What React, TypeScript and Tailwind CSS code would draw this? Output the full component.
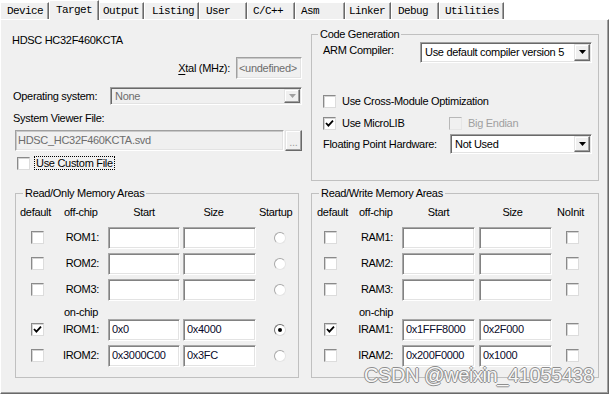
import React from 'react'

const sunken =
  'border border-t-[#a0a0a0] border-l-[#a0a0a0] border-r-white border-b-white shadow-[inset_1px_1px_0_#696969,inset_-1px_-1px_0_#e3e3e3]'
const sunkenField =
  'border border-t-[#a8a8a8] border-l-[#a8a8a8] border-r-white border-b-white shadow-[inset_1px_1px_0_#828282,inset_-1px_-1px_0_#e3e3e3]'
const sunkenLight =
  'border border-t-[#a0a0a0] border-l-[#a0a0a0] border-r-white border-b-white shadow-[inset_1px_1px_0_#c8c8c8,inset_-1px_-1px_0_#e3e3e3]'
const raised =
  'bg-[#f0f0f0] border border-t-[#e3e3e3] border-l-[#e3e3e3] border-r-[#696969] border-b-[#696969] shadow-[inset_-1px_-1px_0_#a0a0a0,inset_1px_1px_0_#ffffff]'

const tabs = [
  { label: 'Device', w: 'w-[49px]', pl: 'pl-[6px]' },
  { label: 'Target', w: 'w-[50px]', pl: 'pl-[6px]', active: true },
  { label: 'Output', w: 'w-[45px]', pl: 'pl-[3px]' },
  { label: 'Listing', w: 'w-[55px]', pl: 'pl-[7px]' },
  { label: 'User', w: 'w-[48px]', pl: 'pl-[6px]' },
  { label: 'C/C++', w: 'w-[48px]', pl: 'pl-[5px]' },
  { label: 'Asm', w: 'w-[50px]', pl: 'pl-[5px]' },
  { label: 'Linker', w: 'w-[46px]', pl: 'pl-[3px]' },
  { label: 'Debug', w: 'w-[48px]', pl: 'pl-[6px]' },
  { label: 'Utilities', w: 'w-[65px]', pl: 'pl-[5px]' },
]

const Check = ({ on, disabled }: { on?: boolean; disabled?: boolean }) => (
  <span
    className={
      disabled
        ? 'w-[13px] h-[13px] flex items-center justify-center bg-[#f0f0f0] border border-t-[#b8b8b8] border-l-[#b8b8b8] border-r-[#e6e6e6] border-b-[#e6e6e6]'
        : 'w-[13px] h-[13px] flex items-center justify-center bg-white border border-t-[#8a8a8a] border-l-[#8a8a8a] border-r-[#dcdcdc] border-b-[#dcdcdc] shadow-[inset_1px_1px_0_#d4d4d4]'
    }
  >
    {on && (
      <svg width="11" height="11" viewBox="0 0 11 11">
        <polyline points="2,5 4.4,7.6 9,2.6" fill="none" stroke="#000" strokeWidth="1.8" />
      </svg>
    )}
  </span>
)

const Radio = ({ on }: { on?: boolean }) => (
  <span
    className={
      on
        ? 'w-[12px] h-[12px] rounded-full bg-white border border-t-[#707070] border-l-[#707070] border-r-[#d8d8d8] border-b-[#d8d8d8] flex items-center justify-center'
        : 'w-[12px] h-[12px] rounded-full bg-white border border-t-[#a8a8a8] border-l-[#a8a8a8] border-r-[#e4e4e4] border-b-[#e4e4e4] flex items-center justify-center'
    }
  >
    {on && <span className="w-[4px] h-[4px] rounded-full bg-black" />}
  </span>
)

const Select = ({ value, disabled, className }: { value: string; disabled?: boolean; className: string }) => (
  <div
    className={`${className} ${sunken} flex items-stretch p-[1px] ${
      disabled ? 'bg-[#f0f0f0] text-[#6d6d6d]' : 'bg-white text-black'
    }`}
  >
    <span className="flex-1 pl-[3px] flex items-center whitespace-nowrap overflow-hidden">{value}</span>
    <span className={`w-[16px] ${raised} flex items-center justify-center`}>
      <svg width="7" height="4" viewBox="0 0 7 4">
        <path d="M0 0h7L3.5 4z" fill={disabled ? '#a0a0a0' : '#000'} />
      </svg>
    </span>
  </div>
)

const Field = ({ value, className }: { value?: string; className: string }) => (
  <div className={`${className} h-[22px] bg-white ${sunkenField} pl-[3px] pt-[2px] leading-[14px] text-[#0a0a2a]`}>
    {value}
  </div>
)

type Row = { label: string; start?: string; size?: string; def?: boolean }

type Cfg = {
  c1: string
  c1Head: string
  c1Ctl: string
  c2: string
  c2Head: string
  c2Lbl: string
  c3: string
  c4: string
  sizeHead: string
  c5Head: string
  c5Ctl: string
  legendMl: string
  box: string
}

const MemArea = ({
  legend,
  lastHead,
  radio,
  off,
  on,
  c,
}: {
  legend: string
  lastHead: string
  radio?: boolean
  off: Row[]
  on: Row[]
  c: Cfg
}) => {
  const row = (r: Row, i: number) => (
    <div key={r.label} className={`flex items-center h-[22px] ${i === 0 ? '' : 'mt-[4px]'}`}>
      <div className={`${c.c1} ${c.c1Ctl} flex`}>
        <Check on={r.def} />
      </div>
      <div className={`${c.c2} ${c.c2Lbl} text-right`}>{r.label}</div>
      <Field className={c.c3} value={r.start} />
      <Field className={c.c4} value={r.size} />
      <div className={`flex-1 ${c.c5Ctl} flex`}>{radio ? <Radio on={r.def} /> : <Check />}</div>
    </div>
  )
  return (
    <fieldset className={`${c.box} h-[191.5px] border border-[#c0c0c0]`}>
      <legend className={`${c.legendMl} px-[2px] leading-[13px]`}>{legend}</legend>
      <div className="flex h-[13px] leading-[13px] mt-[6px]">
        <div className={`${c.c1} ${c.c1Head}`}>default</div>
        <div className={`${c.c2} ${c.c2Head}`}>off-chip</div>
        <div className={`${c.c3} text-center`}>Start</div>
        <div className={`${c.c4} text-center ${c.sizeHead}`}>Size</div>
        <div className={`flex-1 ${c.c5Head}`}>{lastHead}</div>
      </div>
      <div className="mt-[8px]">{off.map(row)}</div>
      <div className="flex h-[14px] leading-[14px] mt-[4px]">
        <div className={c.c1} />
        <div className={`${c.c2} ${c.c2Head}`}>on-chip</div>
      </div>
      <div>{on.map(row)}</div>
    </fieldset>
  )
}

const leftCfg: Cfg = {
  c1: 'w-[43px]',
  c1Head: 'pl-[4px]',
  c1Ctl: 'pl-[15px]',
  c2: 'w-[47px]',
  c2Head: 'pl-[5px]',
  c2Lbl: 'pr-[7px]',
  c3: 'ml-[2px] w-[72px]',
  c4: 'ml-[3px] w-[73px]',
  sizeHead: 'pr-[12px]',
  c5Head: 'pl-[3px]',
  c5Ctl: 'pl-[18px]',
  legendMl: 'ml-[7px]',
  box: 'ml-[3px] w-[284px]',
}

const rightCfg: Cfg = {
  c1: 'w-[40px]',
  c1Head: 'pl-[5px]',
  c1Ctl: 'pl-[12px]',
  c2: 'w-[48px]',
  c2Head: 'pl-[7px]',
  c2Lbl: 'pr-[7px]',
  c3: 'ml-[2px] w-[73px]',
  c4: 'ml-[4px] w-[73px]',
  sizeHead: 'pr-[6px]',
  c5Head: 'pl-[5px]',
  c5Ctl: 'pl-[14px]',
  legendMl: 'ml-[7px]',
  box: 'w-[288px]',
}

export default function App() {
  return (
    <div className="relative w-[612px] h-[396px] bg-white overflow-hidden font-['Liberation_Sans',Arial,sans-serif] text-[11px] tracking-[-0.3px] text-black">
      {/* tab strip */}
      <div className="flex items-end h-[19px] font-['Liberation_Mono','Courier_New',monospace] tracking-[-0.6px]">
        {tabs.map((t) =>
          t.active ? (
            <div
              key={t.label}
              className={`relative z-10 ${t.w} h-[20px] mb-[-1px] ${t.pl} pt-[3px] leading-[13px] bg-[#f0f0f0] border-l border-t border-r border-l-white border-t-white border-r-[#696969] shadow-[inset_-1px_0_0_#a0a0a0]`}
            >
              {t.label}
            </div>
          ) : (
            <div
              key={t.label}
              className={`${t.w} h-[17px] ${t.pl} pt-[3px] leading-[11px] bg-[#f0f0f0] border-l border-t border-r border-l-white border-t-white border-r-[#696969] shadow-[inset_-1px_0_0_#a0a0a0]`}
            >
              {t.label}
            </div>
          )
        )}
      </div>

      {/* page */}
      <div className="w-[609px] h-[375px] bg-[#f0f0f0] border-t border-l border-r border-b border-t-white border-l-white border-r-[#696969] border-b-[#696969] shadow-[inset_-1px_-1px_0_#a0a0a0] flex pl-[11px]">
        {/* left column */}
        <div className="w-[290px] flex flex-col">
          <div className="mt-[14px] h-[13px] leading-[13px]">HDSC HC32F460KCTA</div>
          <div className="mt-[10px] h-[22px] flex items-center justify-end">
            <span className="mr-[6px]">
              <span className="underline underline-offset-2">X</span>tal (MHz):
            </span>
            <div className={`w-[66px] h-[22px] bg-[#f0f0f0] ${sunkenLight} text-[#6d6d6d] pl-[2px] flex items-center`}>
              &lt;undefined&gt;
            </div>
          </div>
          <div className="mt-[8px] h-[18px] flex items-center">
            <span className="pl-[1px]">Operating system:</span>
            <Select value="None" disabled className="ml-auto w-[192px] h-[18px]" />
          </div>
          <div className="mt-[7px] h-[13px] leading-[13px] pl-[1px]">System Viewer File:</div>
          <div className="mt-[5px] h-[21px] flex pl-[3px]">
            <div className={`w-[269px] h-[21px] bg-[#f0f0f0] ${sunkenLight} text-[#6d6d6d] pl-[2px] flex items-center`}>
              HDSC_HC32F460KCTA.svd
            </div>
            <div className={`ml-[1px] w-[17px] h-[21px] ${raised} text-[#a0a0a0] flex items-end justify-center leading-[12px] pb-[2px]`}>
              ...
            </div>
          </div>
          <div className="mt-[5px] h-[14px] flex items-center pl-[5px]">
            <Check />
            <span className="ml-[4px] px-[1px] h-[14px] leading-[12px] border border-dotted border-black">
              Use Custom File
            </span>
          </div>
          <div className="mt-[16.5px]">
            <MemArea
              legend="Read/Only Memory Areas"
              lastHead="Startup"
              radio
              c={leftCfg}
              off={[{ label: 'ROM1:' }, { label: 'ROM2:' }, { label: 'ROM3:' }]}
              on={[
                { label: 'IROM1:', start: '0x0', size: '0x4000', def: true },
                { label: 'IROM2:', start: '0x3000C00', size: '0x3FC' },
              ]}
            />
          </div>
        </div>

        {/* right column */}
        <div className="ml-[9px] w-[288px] flex flex-col">
          <fieldset className="mt-[7.5px] h-[153.5px] border border-[#c0c0c0]">
            <legend className="ml-[6px] px-[2px] leading-[13px]">Code Generation</legend>
            <div className="mt-[1px] h-[21px] flex items-start">
              <span className="pl-[11px] mt-[2px] leading-[13px]">ARM Compiler:</span>
              <Select value="Use default compiler version 5" className="ml-auto mr-[6px] w-[172px] h-[21px]" />
            </div>
            <div className="mt-[32.5px] h-[13px] flex items-center pl-[11px]">
              <Check />
              <span className="ml-[6px]">Use Cross-Module Optimization</span>
            </div>
            <div className="mt-[9px] h-[13px] flex items-center pl-[11px]">
              <div className="w-[126px] flex items-center">
                <Check on />
                <span className="ml-[6px]">Use MicroLIB</span>
              </div>
              <Check disabled />
              <span className="ml-[6px] text-[#a0a0a0]">
                Bi<span className="underline underline-offset-1">g</span> Endian
              </span>
            </div>
            <div className="mt-[4px] h-[20px] flex items-center">
              <span className="pl-[11px]">Floating Point Hardware:</span>
              <Select value="Not Used" className="ml-auto mr-[6px] w-[142px] h-[20px]" />
            </div>
          </fieldset>
          <div className="mt-[5.5px]">
            <MemArea
              legend="Read/Write Memory Areas"
              lastHead="NoInit"
              c={rightCfg}
              off={[{ label: 'RAM1:' }, { label: 'RAM2:' }, { label: 'RAM3:' }]}
              on={[
                { label: 'IRAM1:', start: '0x1FFF8000', size: '0x2F000', def: true },
                { label: 'IRAM2:', start: '0x200F0000', size: '0x1000' },
              ]}
            />
          </div>
        </div>
      </div>

      {/* watermark */}
      <div className="absolute left-[364px] top-[364px] text-[20px] leading-[23px] tracking-[-0.4px] text-[#f7f7f7] [text-shadow:1px_0_#8e8e8e,-1px_0_#8e8e8e,0_1px_#8e8e8e,0_-1px_#8e8e8e]">
        CSDN @weixin_41055438
      </div>
    </div>
  )
}
